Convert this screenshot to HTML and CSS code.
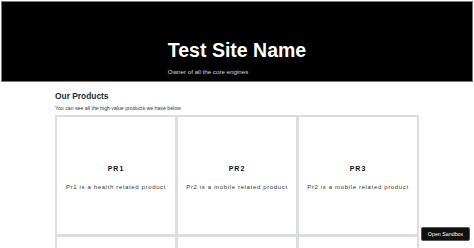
FILE: index.html
```html
<!DOCTYPE html>
<html lang="en">
<head>
    <meta charset="UTF-8">
    <meta name="viewport" content="width=device-width, initial-scale=1.0">
    <title>Test Site Name</title>
    <link rel="stylesheet" href="styles.css">
</head>
<body>

    <!-- 顶部横幅 -->
    <header class="site-header">
        <div class="header-inner">
            <h1>Test Site Name</h1>
            <p>Owner of all the core engines</p>
        </div>
    </header>

    <!-- 产品列表 -->
    <main class="container">
        <h2>Our Products</h2>
        <p class="lead">You can see all the high value products we have below</p>

        <div class="product-grid">
            <div class="product">
                <h3>PR1</h3>
                <p>Pr1 is a health related product</p>
            </div>
            <div class="product">
                <h3>PR2</h3>
                <p>Pr2 is a mobile related product</p>
            </div>
            <div class="product">
                <h3>PR3</h3>
                <p>Pr2 is a mobile related product</p>
            </div>
            <div class="product"></div>
            <div class="product"></div>
            <div class="product"></div>
        </div>
    </main>

    <button class="sandbox-btn">Open Sandbox</button>

</body>
</html>
```

FILE: styles.css
```css
body {
    margin: 0;
    font-family: "Liberation Sans", Arial, sans-serif;
    background-color: #fff;
    color: #333;
}
.site-header {
    margin: 1px;
    border: 1px solid #7a7a7a;
    background-color: #000;
    text-align: center;
    padding: 37px 0 3px;
}
.header-inner {
    display: inline-block;
    text-align: left;
}
.site-header h1 {
    margin: 0;
    font-size: 19.5px;
    line-height: 22px;
    color: #fff;
}
.site-header p {
    margin: 7px 0 0;
    font-size: 6.2px;
    line-height: 7px;
    color: #ddd;
}
.container {
    width: 364px;
    margin: 0 auto;
}
.container h2 {
    margin: 9px 0 0;
    font-size: 8.4px;
    line-height: 10px;
    color: #1c2b36;
}
.lead {
    margin: 4px 0 4px;
    font-size: 5.2px;
    line-height: 6px;
    color: #2c3a44;
}
.product-grid {
    display: grid;
    grid-template-columns: repeat(3, 1fr);
    gap: 3px;
    padding: 2px;
    background-color: #dcdddd;
}
.product {
    box-sizing: border-box;
    height: 117px;
    padding-top: 5px;
    background-color: #fff;
    display: flex;
    flex-direction: column;
    justify-content: center;
    align-items: center;
    text-align: center;
}
.product h3 {
    margin: 0;
    font-size: 7px;
    line-height: 8px;
    letter-spacing: 1px;
    color: #111;
}
.product p {
    margin: 11px 0 0;
    font-size: 6px;
    line-height: 7px;
    letter-spacing: 0.65px;
    color: #333;
}
.sandbox-btn {
    position: fixed;
    right: 4px;
    bottom: 7px;
    width: 49px;
    height: 14px;
    padding: 0;
    border: 1px solid #555;
    border-radius: 2px;
    background-color: #111;
    color: #fff;
    font-family: "Liberation Sans", Arial, sans-serif;
    font-size: 5.3px;
    cursor: pointer;
}
```
